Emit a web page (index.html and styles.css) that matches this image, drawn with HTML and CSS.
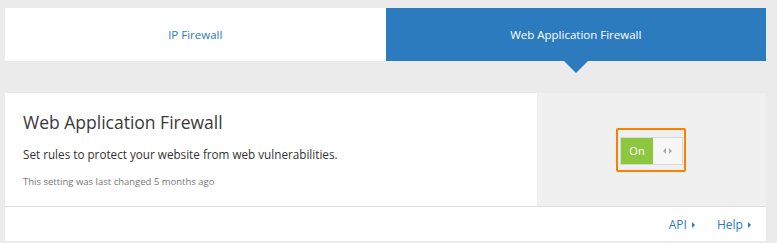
FILE: index.html
```html
<!DOCTYPE html>
<html lang="en">
<head>
  <meta charset="UTF-8">
  <title>Firewall</title>
  <link rel="stylesheet" href="styles.css">
</head>
<body>

<div class="tabs">
  <a class="tab">IP Firewall</a>
  <a class="tab active">Web Application Firewall</a>
</div>

<!-- WAF setting card -->
<div class="card">
  <div class="card-body">
    <div class="card-main">
      <h2>Web Application Firewall</h2>
      <p class="desc">Set rules to protect your website from web vulnerabilities.</p>
      <p class="changed">This setting was last changed 5 months ago</p>
    </div>
    <div class="card-control">
      <div class="highlight">
        <div class="toggle">
          <span class="toggle-on">On</span>
          <span class="toggle-handle">
            <svg width="9" height="6" viewBox="0 0 9 6"><path d="M3 0 L0 3 L3 6 Z M6 0 L9 3 L6 6 Z" fill="#aaa"/></svg>
          </span>
        </div>
      </div>
    </div>
  </div>
  <div class="card-footer">
    <a>API <span class="caret"></span></a>
    <a>Help <span class="caret"></span></a>
  </div>
</div>

</body>
</html>
```

FILE: styles.css
```css
body {
  font-family: 'Open Sans', sans-serif;
  margin: 0;
  background: #ebebeb;
  color: #333;
  padding: 8px 11px 0 5px;
}

.tabs {
  display: flex;
  height: 53px;
}

.tab {
  flex: 1;
  display: flex;
  align-items: center;
  justify-content: center;
  background: #fff;
  color: #2f7bbf;
  font-size: 11.5px;
  position: relative;
}

.tab.active {
  background: #2d7bbf;
  color: #fff;
}

.tab.active::after {
  content: '';
  position: absolute;
  left: 50%;
  bottom: -12px;
  margin-left: -12px;
  border-left: 12px solid transparent;
  border-right: 12px solid transparent;
  border-top: 12px solid #2d7bbf;
}

/* Card */
.card {
  margin-top: 32px;
  background: #fff;
}

.card-body {
  display: flex;
  height: 113px;
  border-bottom: 1px solid #ddd;
}

.card-main {
  flex: 1;
  padding: 17px 18px 0;
}

.card-main h2 {
  margin: 0;
  font-size: 17.5px;
  font-weight: 400;
  color: #3a3a3a;
}

.desc {
  margin: 12px 0 0;
  font-size: 11.7px;
  color: #333;
}

.changed {
  margin: 13px 0 0;
  font-size: 9.5px;
  color: #777;
}

.card-control {
  width: 229px;
  background: #f0f0f0;
  display: flex;
  align-items: center;
  justify-content: center;
}

.highlight {
  border: 2px solid #ff7f00;
  border-radius: 2px;
  padding: 7px 1px 5px 2px;
  margin-left: -1px;
}

.toggle {
  display: flex;
  height: 26px;
  border: 1px solid #d8d8d8;
  background: #f7f7f7;
}

.toggle-on {
  width: 32px;
  background: #8dc63f;
  color: #fff;
  font-size: 11px;
  display: flex;
  align-items: center;
  justify-content: center;
}

.toggle-handle {
  width: 29px;
  display: flex;
  align-items: center;
  justify-content: center;
}

.card-footer {
  display: flex;
  justify-content: flex-end;
  gap: 22px;
  height: 34px;
  align-items: center;
  padding-right: 15px;
  font-size: 12px;
}

.card-footer a {
  color: #2f7bbf;
}

.caret {
  display: inline-block;
  border-left: 3px solid #2f7bbf;
  border-top: 3px solid transparent;
  border-bottom: 3px solid transparent;
  margin-left: 2px;
  vertical-align: 1px;
}
```
